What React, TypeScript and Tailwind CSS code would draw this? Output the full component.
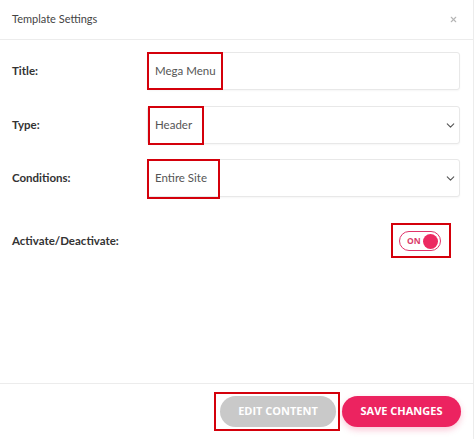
import { ChevronDown, X } from "lucide-react";

const font = { fontFamily: 'Lato, "Open Sans", sans-serif' };
const btnFont = { fontFamily: '"Open Sans", Lato, sans-serif' };

const Marker = ({ className }: { className: string }) => (
  <div className={`absolute border-2 border-[#d4000b] pointer-events-none ${className}`} />
);

const Field = ({
  label,
  value,
  select,
  marker,
}: {
  label: string;
  value: string;
  select?: boolean;
  marker: string;
}) => (
  <div className="flex items-center">
    <div className="w-[135px] text-[11.5px] font-bold text-[#333]">{label}</div>
    <div className="relative flex-1">
      <div className="h-[38px] flex items-center justify-between pl-[7px] pr-[2px] border border-[#e8e8e8] rounded-[3px] shadow-[0_1px_2px_rgba(0,0,0,0.04)] bg-white">
        <span className="text-[11.5px] text-[#555]">{value}</span>
        {select && <ChevronDown className="w-[13px] h-[13px] text-[#555]" strokeWidth={2} />}
      </div>
      <Marker className={marker} />
    </div>
  </div>
);

export default function App() {
  return (
    <div style={font} className="w-[474px] h-[439px] bg-white flex flex-col border-r border-[#ececec]">
      <div className="h-[40px] shrink-0 flex items-center justify-between pl-3 pr-[15px] border-b border-[#ececec]">
        <span className="text-[11px] text-[#444]">Template Settings</span>
        <X className="w-[9px] h-[9px] text-[#b5b5b5]" strokeWidth={3} />
      </div>

      <div className="flex-1 flex flex-col pl-3 pr-[13px] pt-[12px]">
        <div className="flex flex-col gap-[16px]">
          <Field label="Title:" value="Mega Menu" marker="left-0 top-0 w-[76px] h-[38px]" />
          <Field label="Type:" value="Header" select marker="left-[1px] top-0 w-[56px] h-[39px]" />
        </div>
        <div className="mt-[15px]">
          <Field label="Conditions:" value="Entire Site" select marker="left-0 top-0 w-[73px] h-[40px]" />
        </div>

        <div className="mt-[34px] flex items-center justify-between">
          <div className="text-[11.5px] font-bold text-[#333]">Activate/Deactivate:</div>
          <div className="relative mr-[19px] w-[42px] h-[20px] rounded-full border border-[#e0336a] flex items-center justify-between pl-[7px] pr-[2px]">
            <span style={btnFont} className="text-[8.5px] font-bold text-[#d93c6a]">ON</span>
            <span className="w-[15px] h-[15px] rounded-full bg-[#ec2a62]" />
            <Marker className="-left-[9px] -top-[9px] w-[60px] h-[35px]" />
          </div>
        </div>
      </div>

      <div style={btnFont} className="h-[56px] shrink-0 border-t border-[#ececec] flex items-start justify-end gap-[6px] pt-[12px] pr-3">
        <div className="relative">
          <button className="w-[116px] h-[31px] rounded-full bg-[#c9c9c9] text-white text-[11px] font-bold uppercase">
            Edit Content
          </button>
          <Marker className="-left-[6px] -top-[4px] w-[126px] h-[39px]" />
        </div>
        <button className="w-[119px] h-[31px] rounded-full bg-[#ec2360] text-white text-[11px] font-bold uppercase shadow-[0_3px_6px_rgba(236,35,96,0.25)]">
          Save Changes
        </button>
      </div>
    </div>
  );
}
